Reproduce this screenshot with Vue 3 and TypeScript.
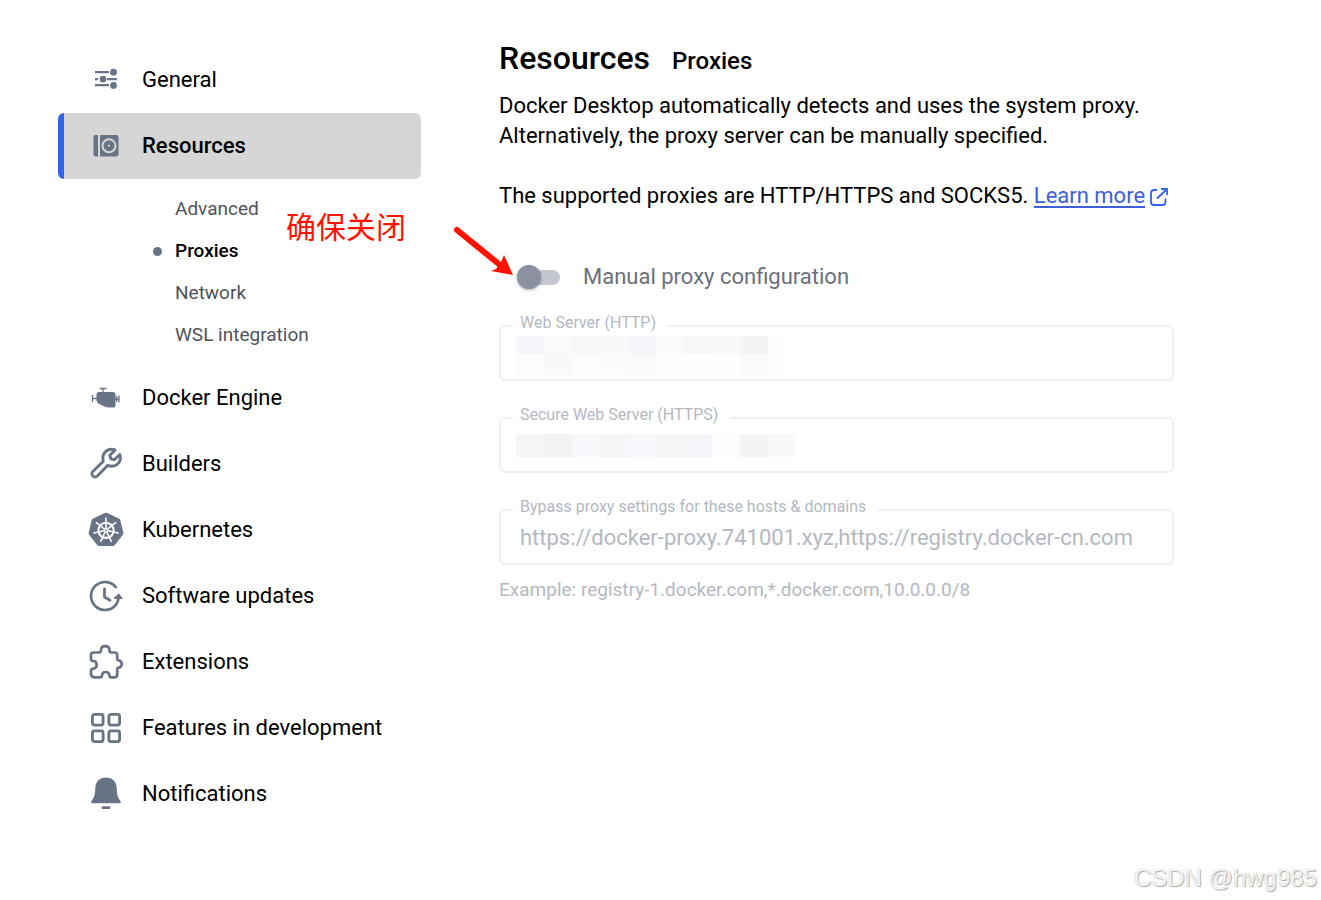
<script setup lang="ts">
import { ref } from 'vue'

type IconName =
  | 'general' | 'resources' | 'engine' | 'builders' | 'kubernetes'
  | 'updates' | 'extensions' | 'features' | 'notifications'

interface NavItem {
  label: string
  icon: IconName
  children?: string[]
}

const navItems: NavItem[] = [
  { label: 'General', icon: 'general' },
  { label: 'Resources', icon: 'resources', children: ['Advanced', 'Proxies', 'Network', 'WSL integration'] },
  { label: 'Docker Engine', icon: 'engine' },
  { label: 'Builders', icon: 'builders' },
  { label: 'Kubernetes', icon: 'kubernetes' },
  { label: 'Software updates', icon: 'updates' },
  { label: 'Extensions', icon: 'extensions' },
  { label: 'Features in development', icon: 'features' },
  { label: 'Notifications', icon: 'notifications' },
]

const activeItem = ref('Resources')
const activeChild = ref('Proxies')
const manualProxy = ref(false)
const httpProxy = ref('')
const httpsProxy = ref('')
const bypass = ref('https://docker-proxy.741001.xyz,https://registry.docker-cn.com')

const httpMask: string[] = [
  '#f5f6f9', '#f9fbfa', '#f7f7f7', '#f8faf9', '#f4f6f9', '#fafafb', '#f7f7f8', '#f8faf9', '#f4f4f7', '#fdfdfd',
  '#fbfdfc', '#f9f9f9', '#fcfcfd', '#fbfbfc', '#fafafb', '#fcfefd', '#fcfdfd', '#fcfdfd', '#fafafb', '#fdfdfd',
]
const httpsMask: string[] = [
  '#f4f5f7', '#f3f3f5', '#f7f9fc', '#f5f6f8', '#f6f8fb', '#f6f6f7', '#f5f6f9', '#fbfcfc', '#f4f4f7', '#f9f9fa',
]
const spokes = [0, 1, 2, 3, 4, 5, 6]
</script>

<template>
  <div class="page">
    <nav class="sidebar" aria-label="Settings">
      <template v-for="item in navItems" :key="item.label">
        <button
          type="button"
          class="nav-item"
          :class="{ active: item.label === activeItem }"
          @click="activeItem = item.label"
        >
          <svg class="nav-icon" viewBox="0 0 36 36" aria-hidden="true">
            <g v-if="item.icon === 'general'" fill="currentColor">
              <path d="M7 9h14v2.200H7zM7 16h3v2.200H7zM19 16h10v2.200H19zM7 22h14v2.200H7z" />
              <circle cx="25.5" cy="10.200" r="3.4" />
              <circle cx="15" cy="17.100" r="3.4" />
              <circle cx="25.5" cy="23.400" r="3.4" />
            </g>
            <g v-else-if="item.icon === 'resources'">
              <path d="M7.5 7H10v21.500H7.5q-2 0-2-2V9q0-2 2-2zM12 7h16.500q2 0 2 2v17.500q0 2-2 2H12z" fill="currentColor" />
              <circle cx="21" cy="17.700" r="6.500" fill="none" stroke="#d6d6d6" stroke-width="2" />
              <circle cx="21" cy="17.700" r="1.100" fill="#d6d6d6" />
            </g>
            <g v-else-if="item.icon === 'engine'" fill="none" stroke="currentColor">
              <path d="M9 14q0-1.500 2-1.500h14.500q1.500 0 1.500 1.500v12q0 1-1.500 1h-5q-2 0-4-1l-5.500-2.500q-2-1-2-3z" fill="currentColor" />
              <path d="M15 13V8.500M11.500 8.500h7M4.500 15v7M4.500 18.500H9M27 19h4M31 15.500v7M28.700 16v6" stroke-width="1.300" />
            </g>
            <path
              v-else-if="item.icon === 'builders'"
              transform="translate(36 -2) scale(-1 1)"
              fill="none" stroke="currentColor" stroke-width="2.900" stroke-linejoin="round" stroke-linecap="round"
              d="M16.500 21.500l9.900 10.200c1.600 1.600 3.400 1.600 4.800.3 1.400-1.400 1.300-3.200-.3-4.800L20.700 17.300c.9-3.400.6-6.700-1.900-9.200-2.600-2.700-6.300-3.500-9.900-2.200l5.200 5.300-.9 3.600-3.600.9-5.400-5.200c-1.300 3.500-.5 7.100 2.200 9.500 2.700 2.600 6.600 2.600 10.100 1.500z"
            />
            <g v-else-if="item.icon === 'kubernetes'">
              <path d="M16.700 1q1.300-.6 2.600 0l11.500 5.500q1.300.6 1.600 2l2.900 12q.3 1.400-.6 2.500l-7.800 10q-.9 1.100-2.300 1.100H11.400q-1.400 0-2.300-1.100L1.300 23q-.9-1.100-.6-2.500l2.900-12q.3-1.400 1.600-2z" fill="currentColor" />
              <g fill="none" stroke="#fff">
                <circle cx="18" cy="18.300" r="7.600" stroke-width="2.100" />
                <circle cx="18" cy="18.300" r="2.100" fill="#fff" stroke="none" />
                <path
                  v-for="n in spokes" :key="n"
                  d="M18 16V6" stroke-width="1.500" stroke-linecap="round"
                  :transform="`rotate(${n * 360 / 7} 18 18.3)`"
                />
              </g>
              <circle cx="18" cy="18.300" r=".9" fill="currentColor" />
            </g>
            <g v-else-if="item.icon === 'updates'" fill="none" stroke="currentColor" stroke-linecap="round" stroke-linejoin="round">
              <path d="M28.500 10A14 14 0 1 0 28.500 26Q30.500 23 30.700 19" stroke-width="2.700" stroke-linecap="butt" />
              <path d="M16.500 11v8l5.500 3.300" stroke-width="2.800" />
              <path d="M26.500 20.300l4.200-3.800 3 3.800z" fill="currentColor" stroke-width="1.500" />
            </g>
            <path
              v-else-if="item.icon === 'extensions'"
              fill="none" stroke="currentColor" stroke-width="2.700" stroke-linejoin="round"
              d="M5.500 8.500H11q2 0 2-2.200C13 3.500 15 2.200 17.200 2.200s4.200 1.300 4.200 4.100q0 2.200 2 2.200h3.200q2.600 0 2.600 2.600v3.500q0 1.500 1.400 1.700c2.100.2 3.100 1.700 3.100 3.600s-1 3.400-3.100 3.700q-1.400.2-1.400 1.700v5.500q0 2.500-2.600 2.500h-3.200q-1.800 0-2-2-.4-3.300-3.700-3.300T14 31.300q-.2 2-2 2H6.500q-3.500 0-3.500-3.500v-3q0-1.800 2-2 3.700-.3 3.700-4T5 17q-2-.2-2-2v-4q0-2.500 2.500-2.500z"
            />
            <g v-else-if="item.icon === 'features'" fill="none" stroke="currentColor" stroke-width="2.800">
              <rect x="4.400" y="4.400" width="10.700" height="10.700" rx="2" />
              <rect x="20.900" y="4.400" width="10.700" height="10.700" rx="2" />
              <rect x="4.400" y="20.900" width="10.700" height="10.700" rx="2" />
              <rect x="20.900" y="20.900" width="10.700" height="10.700" rx="2" />
            </g>
            <g v-else fill="currentColor" transform="translate(0 -.7)">
              <path d="M18 2.300c6.600 0 10.500 4.500 10.700 10.500.2 6.700 1 9.300 3.700 12.700 1 1.400.3 2.500-1.200 2.500H4.800c-1.500 0-2.200-1.100-1.200-2.500 2.700-3.400 3.500-6 3.700-12.700C7.500 6.800 11.400 2.300 18 2.300z" />
              <rect x="13.500" y="31" width="9" height="2.800" rx="1.400" />
            </g>
          </svg>
          <span>{{ item.label }}</span>
        </button>
        <ul v-if="item.children" class="sub-list">
          <li v-for="child in item.children" :key="child">
            <button
              type="button"
              class="sub-item"
              :class="{ current: child === activeChild }"
              @click="activeChild = child"
            >
              <span class="dot"></span>{{ child }}
            </button>
          </li>
        </ul>
      </template>
      <p class="note">确保关闭</p>
    </nav>

    <main class="content">
      <header class="heading">
        <h1>Resources</h1>
        <h2>Proxies</h2>
      </header>
      <p class="intro">
        Docker Desktop automatically detects and uses the system proxy.<br>
        Alternatively, the proxy server can be manually specified.
      </p>
      <p class="intro supported">
        The supported proxies are HTTP/HTTPS and SOCKS5.
        <a href="#learn-more">Learn more</a>
        <svg class="external" viewBox="0 0 20 20" aria-hidden="true">
          <path d="M8 3H5Q2 3 2 6v9q0 3 3 3h8.500q3 0 3-3v-3.500M8 11.500L18 2M12 2h6v6" fill="none" stroke="currentColor" stroke-width="1.800" />
        </svg>
      </p>

      <div class="toggle-row">
        <input id="manual" v-model="manualProxy" class="switch" type="checkbox" role="switch">
        <label for="manual">Manual proxy configuration</label>
        <svg class="arrow" viewBox="0 0 62 52" aria-hidden="true">
          <path d="M4 5L47 40" stroke="#ff1200" stroke-width="6" stroke-linecap="round" />
          <path d="M60 50L51 30L48 37L43 44L38 46z" fill="#ff1200" />
        </svg>
      </div>

      <div class="field">
        <input id="http" v-model="httpProxy" type="text" :disabled="!manualProxy">
        <label for="http">Web Server (HTTP)</label>
        <div class="mask mask-http" aria-hidden="true">
          <span v-for="(color, i) in httpMask" :key="i" :style="{ backgroundColor: color }"></span>
        </div>
      </div>
      <div class="field">
        <input id="https" v-model="httpsProxy" type="text" :disabled="!manualProxy">
        <label for="https">Secure Web Server (HTTPS)</label>
        <div class="mask mask-https" aria-hidden="true">
          <span v-for="(color, i) in httpsMask" :key="i" :style="{ backgroundColor: color }"></span>
        </div>
      </div>
      <div class="field">
        <input id="bypass" v-model="bypass" type="text" :disabled="!manualProxy" aria-describedby="example">
        <label for="bypass">Bypass proxy settings for these hosts &amp; domains</label>
      </div>
      <p id="example" class="example">Example: registry-1.docker.com,*.docker.com,10.0.0.0/8</p>
    </main>

    <div class="watermark">CSDN @hwg985</div>
  </div>
</template>

<style>
body {
  background: #fff;
}
</style>

<style scoped>
.page {
  box-sizing: border-box;
  position: relative;
  display: grid;
  grid-template-columns: minmax(300px, 363px) minmax(0, 675px);
  column-gap: 78px;
  min-height: 100vh;
  padding: 38px 58px 60px;
  color: #000;
  font: 22px/30px Roboto, "Noto Sans CJK SC", sans-serif;
}
.sidebar {
  position: relative;
  padding-top: 9px;
}
button {
  border: 0;
  background: none;
  color: inherit;
  font: inherit;
  text-align: left;
  cursor: pointer;
}
.nav-item {
  display: flex;
  align-items: center;
  gap: 18px;
  width: 100%;
  height: 66px;
  padding: 0 0 0 24px;
  border-left: 6px solid transparent;
  border-radius: 6px;
}
.nav-item.active {
  border-left-color: #3163e8;
  background: #d6d6d6;
  font-weight: 500;
}
.nav-icon {
  flex: none;
  width: 36px;
  height: 36px;
  color: #697386;
}
.sub-list {
  margin: 0;
  padding: 9px 0;
  list-style: none;
}
.sub-item {
  display: flex;
  align-items: center;
  gap: 13px;
  height: 42px;
  padding: 0 0 0 95px;
  color: #4f5359;
  font-size: 19px;
}
.dot {
  width: 9px;
  height: 9px;
  border-radius: 50%;
}
.sub-item.current {
  color: #000;
  font-weight: 500;
}
.current .dot {
  background: #697386;
}
.note {
  position: absolute;
  top: 172px;
  left: 228px;
  margin: 0;
  color: #ff1200;
  font: 30px/30px "Kaiti SC", KaiTi, STKaiti, "Noto Sans CJK SC", serif;
}
.heading {
  display: flex;
  align-items: baseline;
  gap: 22px;
}
h1,
h2 {
  margin: 0;
  font-weight: 500;
}
h1 {
  font-size: 32px;
  line-height: 40px;
}
h2 {
  font-size: 24px;
  line-height: 32px;
}
.intro {
  margin: 13px 0 0;
}
.supported {
  margin-top: 30px;
}
a {
  color: #3c5fdc;
  text-decoration-thickness: 2px;
  text-underline-offset: 3px;
}
.external {
  width: 20px;
  height: 20px;
  margin-left: 4px;
  color: #3163e8;
  vertical-align: -4px;
}
.toggle-row {
  position: relative;
  display: flex;
  align-items: center;
  gap: 22px;
  margin: 51px 0 33px;
  padding-left: 18px;
  color: #69707d;
}
.switch {
  appearance: none;
  position: relative;
  width: 44px;
  height: 30px;
  margin: 0;
}
.switch::before {
  content: "";
  position: absolute;
  inset: 8px 1px 7px 4px;
  border-radius: 8px;
  background: #c4c7d0;
}
.switch::after {
  content: "";
  position: absolute;
  top: 3px;
  left: 0;
  width: 24px;
  height: 24px;
  border-radius: 50%;
  background: #8b91a1;
  box-shadow: 0 1px 3px #0005;
}
.switch:checked::after {
  left: 20px;
}
.arrow {
  position: absolute;
  top: -37px;
  left: -46px;
  width: 62px;
  height: 52px;
}
.field {
  position: relative;
  margin-bottom: 36px;
}
.field input {
  box-sizing: border-box;
  display: block;
  width: 100%;
  height: 56px;
  padding: 0 19px;
  border: 2px solid #efefef;
  border-radius: 6px;
  background: #fff;
  color: #b4b8c2;
  font: inherit;
}
.field label {
  position: absolute;
  top: -13px;
  left: 14px;
  padding: 0 12px 0 7px;
  background: #fff;
  color: #b4b8c2;
  font-size: 16px;
  line-height: 22px;
}
.mask {
  position: absolute;
  left: 17px;
  display: grid;
  grid-template-columns: repeat(10, 28px);
  pointer-events: none;
}
.mask-http {
  top: 11px;
  grid-template-columns: repeat(9, 28px) 18px;
  grid-template-rows: 18px 21px;
}
.mask-https {
  top: 17px;
  grid-template-rows: 23px;
}
.example {
  margin: -26px 0 0;
  color: #b4b8c2;
  font-size: 19px;
}
.watermark {
  position: absolute;
  right: 4px;
  bottom: 7px;
  color: #f4f4f4;
  font: 24px/30px "Liberation Sans", sans-serif;
  text-shadow: 1px 1px 1px #aaa, 0 0 1px #bbb;
}
</style>
